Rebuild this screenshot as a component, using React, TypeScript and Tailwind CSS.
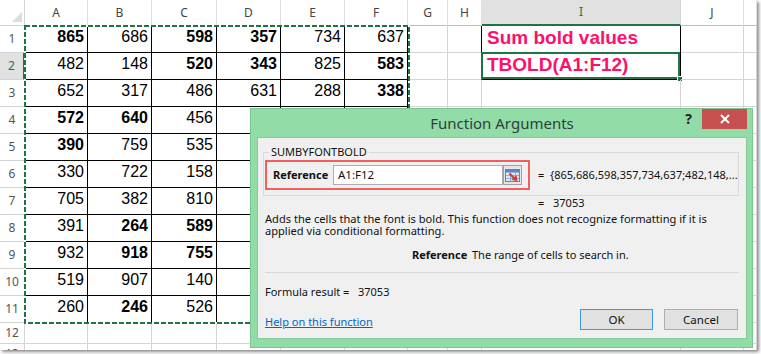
import React from 'react';

const COLS = ['A', 'B', 'C', 'D', 'E', 'F', 'G', 'H', 'I', 'J', ''];

// '*' prefix = bold value
const DATA: string[][] = [
  ['*865', '686', '*598', '*357', '734', '637'],
  ['482', '148', '*520', '*343', '825', '*583'],
  ['652', '317', '486', '631', '288', '*338'],
  ['*572', '*640', '456', '', '', ''],
  ['*390', '759', '535', '', '', ''],
  ['330', '722', '158', '', '', ''],
  ['705', '382', '810', '', '', ''],
  ['391', '*264', '*589', '', '', ''],
  ['932', '*918', '*755', '', '', ''],
  ['519', '907', '140', '', '', ''],
  ['260', '*246', '526', '', '', ''],
];

function CornerCell() {
  return (
    <div className="flex items-end justify-end border-r border-b border-[#d4d4d4] pr-[2px] pb-[3px]">
      <svg width="10" height="10" viewBox="0 0 10 10">
        <polygon points="10,0 10,10 0,10" fill="#dcdcdc" />
      </svg>
    </div>
  );
}

function SheetRow({ r }: { r: number }) {
  const values = DATA[r - 1];
  const selectedRow = r === 2;
  return (
    <>
      <div
        className={
          selectedRow
            ? 'flex items-center justify-center border-r-2 border-r-[#217346] border-b border-b-[#d4d4d4] bg-[#e1e1e1] text-[12px] text-[#217346]'
            : 'flex items-center justify-center border-r border-b border-[#d4d4d4] text-[12px] text-[#555]'
        }
      >
        {r}
      </div>
      {COLS.map((_, c) => {
        const raw = c < 6 ? values[c] : '';
        const bold = raw.startsWith('*');
        const text = raw.replace('*', '');
        // column I is index 8, H is index 7
        const blackR = c < 6 || ((c === 7 || c === 8) && r <= 2);
        const blackB = c < 6 || (c === 8 && r <= 2);
        let cls = 'relative flex items-end pb-[3px] border-r border-b text-[16px] text-black whitespace-nowrap font-["Liberation_Sans",Arial,sans-serif] ';
        cls += blackR ? 'border-r-black ' : 'border-r-[#d4d4d4] ';
        cls += blackB ? 'border-b-black ' : 'border-b-[#d4d4d4] ';
        cls += c === 8 ? 'justify-start pl-[5px] ' : 'justify-end pr-[3px] ';
        if (bold) cls += 'font-bold ';
        return (
          <div key={c} className={cls}>
            {c === 8 && r === 1 && <span className="font-bold text-[19px] leading-[22px] text-[#ff0f6a]">Sum bold values</span>}
            {c === 8 && r === 2 && (
              <>
                <span className="font-bold text-[19px] leading-[22px] text-[#ff0f6a]">TBOLD(A1:F12)</span>
                <div className="absolute -left-[1px] -top-[1px] right-0 bottom-0 border-2 border-[#217346]" />
                <div className="absolute -right-[3px] -bottom-[3px] w-[6px] h-[6px] bg-[#217346] border border-white" />
              </>
            )}
            {text}
          </div>
        );
      })}
    </>
  );
}

function EmptyRow({ r }: { r: number }) {
  return (
    <>
      <div className="flex items-center justify-center border-r border-b border-[#d4d4d4] text-[12px] text-[#555]">{r}</div>
      {COLS.map((_, c) => (
        <div key={c} className="border-r border-b border-[#d4d4d4]" />
      ))}
    </>
  );
}

function CollapseIcon() {
  return (
    <svg width="15" height="13" viewBox="0 0 15 13">
      <rect x="0.5" y="0.5" width="14" height="12" fill="#dde9f7" stroke="#5a86c4" />
      <rect x="1" y="1" width="13" height="2.5" fill="#5a86c4" />
      <line x1="1" y1="6.5" x2="14" y2="6.5" stroke="#8fb0dc" />
      <line x1="1" y1="9.5" x2="14" y2="9.5" stroke="#8fb0dc" />
      <line x1="5.5" y1="3" x2="5.5" y2="12" stroke="#8fb0dc" />
      <line x1="10.5" y1="3" x2="10.5" y2="12" stroke="#8fb0dc" />
      <path d="M4.5 4.5 L10 10" stroke="#e2361f" strokeWidth="2.2" />
      <polygon points="12.5,12 6.5,11 11.5,6" fill="#e2361f" />
    </svg>
  );
}

function FunctionDialog() {
  return (
    <div className="absolute left-[250px] top-[108px] w-[503px] h-[240px] bg-[#92dca7] border border-[#7cc592] pl-[6px] pr-[5px] flex flex-col font-['Noto_Sans',sans-serif] text-[#111]">
      <div className="h-[28px] flex items-start">
        <div className="flex-1" />
        <div className="pt-[4px] text-[15px] text-[#2e3f3b] leading-[20px]">Function Arguments</div>
        <div className="flex-1 flex justify-end items-start">
          <span className="mt-[1px] mr-[10px] text-[14px] font-bold text-[#222] leading-[18px]">?</span>
          <button className="w-[45px] h-[20px] bg-[#c75050] text-white flex items-center justify-center">
            <svg width="10" height="10" viewBox="0 0 10 10">
              <path d="M1 1 L9 9 M9 1 L1 9" stroke="white" strokeWidth="2" />
            </svg>
          </button>
        </div>
      </div>
      <div className="h-[202px] bg-[#f0f0f0] border border-[#86c99a] flex flex-col text-[11px] leading-[12px]">
        <fieldset className="mt-[7px] ml-[5px] w-[475px] border border-[#d9d9d9] pb-[5px] pl-[1px]">
          <legend className="ml-[4px] px-[2px] leading-[14px] text-[11px]">SUMBYFONTBOLD</legend>
          <div className="flex items-center mt-[1px]">
            <div className="w-[265px] h-[30px] border-2 border-[#f25f5f] flex items-center pl-[6px]">
              <span className="w-[60px] font-bold">Reference</span>
              <div className="w-[170px] h-[20px] bg-white border border-[#abadb3] flex items-center pl-[4px] text-[11.5px]">A1:F12</div>
              <div className="w-[19px] h-[20px] bg-[#e6e6e6] border border-[#a0a0a0] flex items-center justify-center">
                <CollapseIcon />
              </div>
            </div>
            <span className="ml-[8px] w-[12px]">=</span>
            <span>{'{865,686,598,357,734,637;482,148,...'}</span>
          </div>
        </fieldset>
        <div className="flex ml-[280px] h-[14px] items-center">
          <span className="w-[15px]">=</span>
          <span>37053</span>
        </div>
        <p className="mt-[3px] px-[7px] text-[11.1px] leading-[12px]">
          Adds the cells that the font is bold. This function does not recognize formatting if it is applied via conditional formatting.
        </p>
        <div className="mt-[12px] flex ml-[154px]">
          <span className="font-bold w-[60px]">Reference</span>
          <span>The range of cells to search in.</span>
        </div>
        <div className="mt-[11px] mx-[7px] h-px bg-[#d8d8d8]" />
        <div className="mt-[13px] px-[7px]">Formula result =&nbsp;&nbsp;&nbsp;37053</div>
        <div className="mt-[11px] flex items-center pl-[7px] pr-[8px]">
          <a className="flex-1 text-[#0066cc] underline pt-[4px]">Help on this function</a>
          <button className="w-[73px] h-[21px] bg-[#e1e1e1] border border-[#3c9be8] text-[11.5px]">OK</button>
          <button className="ml-[11px] w-[74px] h-[21px] bg-[#e1e1e1] border border-[#adadad] text-[11.5px]">Cancel</button>
        </div>
      </div>
    </div>
  );
}

export default function App() {
  return (
    <div className="w-[761px] h-[354px] bg-white overflow-hidden">
      <div className="relative w-[757px] h-[350px] overflow-hidden bg-white shadow-[2px_2px_3px_rgba(0,0,0,0.45)]">
        <div className="grid grid-cols-[25px_63px_64px_65px_64px_64px_63px_40px_34px_199px_63px_13px] grid-rows-[26px_repeat(11,27px)_21px_21px] font-['Noto_Sans',sans-serif]">
          <CornerCell />
          {COLS.map((col, c) =>
            c === 8 ? (
              <div key={c} className="flex items-center justify-center bg-[#e1e1e1] border-r border-r-[#d4d4d4] border-b-2 border-b-[#217346] text-[12px] text-[#217346]">
                {col}
              </div>
            ) : (
              <div key={c} className="flex items-center justify-center border-r border-r-[#e1e1e1] border-b border-b-[#bdbdbd] text-[12px] text-[#444]">
                {col}
              </div>
            )
          )}
          {DATA.map((_, i) => (
            <SheetRow key={i} r={i + 1} />
          ))}
          <EmptyRow r={12} />
          <EmptyRow r={13} />
        </div>

        {/* copy marquee around A1:F11 */}
        <svg className="absolute left-[24px] top-[25px]" width="386" height="299">
          <rect x="1" y="1" width="384" height="297" fill="none" stroke="white" strokeWidth="2" />
          <rect x="1" y="1" width="384" height="297" fill="none" stroke="#217346" strokeWidth="2" strokeDasharray="5 2" />
        </svg>

        <FunctionDialog />
      </div>
    </div>
  );
}
